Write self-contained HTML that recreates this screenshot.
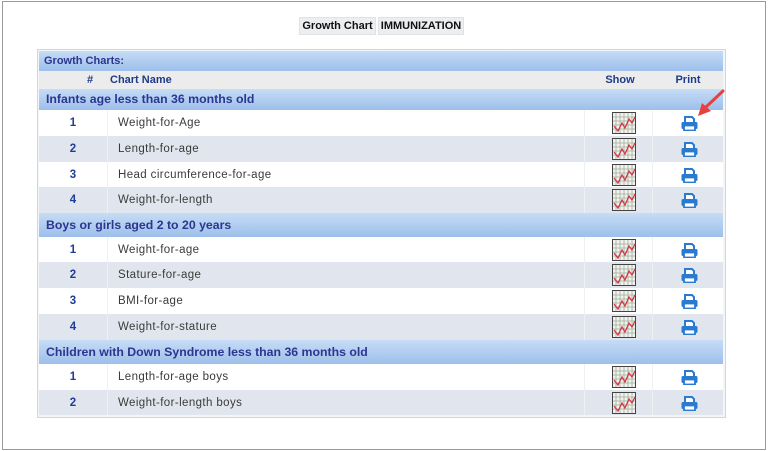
<!DOCTYPE html>
<html><head><meta charset="utf-8"><style>
*{margin:0;padding:0;box-sizing:border-box}
body{width:768px;height:451px;background:#fff;font-family:"Liberation Sans",Arial,sans-serif;position:relative;overflow:hidden}
.frame{position:absolute;left:2px;top:1px;width:764px;height:449px;border:1px solid #9a9a9a}
.tab{position:absolute;top:17px;height:18px;background:#eceef0;border:1px solid #e0e3e6;font-size:11px;font-weight:bold;color:#111;line-height:16px;text-align:center}
.tbl{position:absolute;left:37px;top:49px;width:689px;height:369px;border:1px solid #c4d8ee;background:#f3f6f9}
.r{position:absolute;left:39px;width:684px}
.blue{background:linear-gradient(#c6dcf6,#9dbfea);color:#2c3590;font-size:11px;font-weight:bold;padding-left:5px}
.gp{font-size:12.3px;padding-left:7px}
.hd{background:#ececec;color:#1e3a8a;font-size:11px;font-weight:bold}
.row{font-size:11.5px}
.w{background:#fff}.g{background:#e1e6ee}
.c{position:absolute;top:0;height:100%;display:flex;align-items:center}
.n{left:0;width:69px;justify-content:center;color:#1f3d96;font-weight:bold;border-right:1px solid #eef0f3}
.nm{left:69px;width:477px;padding-left:10px;color:#3a3a3a;letter-spacing:.4px;border-right:1px solid #eef0f3}
.sh{left:546px;width:68px;justify-content:center;padding-left:10px;border-right:1px solid #eef0f3}
.pr{left:614px;width:70px;justify-content:center;padding-left:2px}
</style></head><body>
<div class="frame"></div>
<div class="tab" style="left:299px;width:77px">Growth Chart</div>
<div class="tab" style="left:378px;width:86px">IMMUNIZATION</div>
<div class="tbl"></div>
<svg width="0" height="0" style="position:absolute">
<defs>
<g id="ch"><rect x="0.5" y="0.5" width="23" height="21" fill="#f4f0ef" stroke="#444"/>
<path d="M4 1v20M8 1v20M12 1v20M16 1v20M20 1v20M1 5h22M1 9h22M1 13h22M1 17h22" stroke="#98b098" stroke-width="0.8"/>
<path d="M2 14l4 5 4-8 3 5 4-9 3 4 3-6" fill="none" stroke="#d03848" stroke-width="1.3"/></g>
<g id="pt"><path d="M4 2h7l2 2v4H4z" fill="#fff" stroke="#2a7ad0" stroke-width="2"/>
<rect x="0.5" y="7" width="16" height="7" rx="1.5" fill="#2a7ad0"/>
<rect x="3" y="10.5" width="11" height="5" fill="#fff" stroke="#2a7ad0" stroke-width="1.8"/></g>
</defs></svg>
<div class="r blue" style="top:51px;height:20px;line-height:20px;left:39px">Growth Charts:</div>
<div class="r hd" style="top:71px;height:18px">
<div class="c" style="left:41px;width:20px;justify-content:center">#</div>
<div class="c" style="left:71px">Chart Name</div>
<div class="c" style="left:546px;width:68px;padding-left:2px;justify-content:center">Show</div>
<div class="c" style="left:614px;width:70px;justify-content:center">Print</div></div>
<div class="r blue gp" style="top:89px;height:21px;line-height:21px">Infants age less than 36 months old</div>
<div class="r row w" style="top:110px;height:26px"><div class="c n">1</div><div class="c nm">Weight-for-Age</div><div class="c sh"><svg width="24" height="22"><use href="#ch"/></svg></div><div class="c pr"><svg width="17" height="16"><use href="#pt"/></svg></div></div>
<div class="r row g" style="top:136px;height:26px"><div class="c n">2</div><div class="c nm">Length-for-age</div><div class="c sh"><svg width="24" height="22"><use href="#ch"/></svg></div><div class="c pr"><svg width="17" height="16"><use href="#pt"/></svg></div></div>
<div class="r row w" style="top:162px;height:25px"><div class="c n">3</div><div class="c nm">Head circumference-for-age</div><div class="c sh"><svg width="24" height="22"><use href="#ch"/></svg></div><div class="c pr"><svg width="17" height="16"><use href="#pt"/></svg></div></div>
<div class="r row g" style="top:187px;height:26px"><div class="c n">4</div><div class="c nm">Weight-for-length</div><div class="c sh"><svg width="24" height="22"><use href="#ch"/></svg></div><div class="c pr"><svg width="17" height="16"><use href="#pt"/></svg></div></div>
<div class="r blue gp" style="top:213px;height:24px;line-height:24px">Boys or girls aged 2 to 20 years</div>
<div class="r row w" style="top:237px;height:25px"><div class="c n">1</div><div class="c nm">Weight-for-age</div><div class="c sh"><svg width="24" height="22"><use href="#ch"/></svg></div><div class="c pr"><svg width="17" height="16"><use href="#pt"/></svg></div></div>
<div class="r row g" style="top:262px;height:26px"><div class="c n">2</div><div class="c nm">Stature-for-age</div><div class="c sh"><svg width="24" height="22"><use href="#ch"/></svg></div><div class="c pr"><svg width="17" height="16"><use href="#pt"/></svg></div></div>
<div class="r row w" style="top:288px;height:26px"><div class="c n">3</div><div class="c nm">BMI-for-age</div><div class="c sh"><svg width="24" height="22"><use href="#ch"/></svg></div><div class="c pr"><svg width="17" height="16"><use href="#pt"/></svg></div></div>
<div class="r row g" style="top:314px;height:26px"><div class="c n">4</div><div class="c nm">Weight-for-stature</div><div class="c sh"><svg width="24" height="22"><use href="#ch"/></svg></div><div class="c pr"><svg width="17" height="16"><use href="#pt"/></svg></div></div>
<div class="r blue gp" style="top:340px;height:24px;line-height:24px">Children with Down Syndrome less than 36 months old</div>
<div class="r row w" style="top:364px;height:26px"><div class="c n">1</div><div class="c nm">Length-for-age boys</div><div class="c sh"><svg width="24" height="22"><use href="#ch"/></svg></div><div class="c pr"><svg width="17" height="16"><use href="#pt"/></svg></div></div>
<div class="r row g" style="top:390px;height:25px"><div class="c n">2</div><div class="c nm">Weight-for-length boys</div><div class="c sh"><svg width="24" height="22"><use href="#ch"/></svg></div><div class="c pr"><svg width="17" height="16"><use href="#pt"/></svg></div></div>
<svg style="position:absolute;left:692px;top:86px" width="40" height="36">
<path d="M31 5L14 21" stroke="#e8403c" stroke-width="3" stroke-linecap="round"/>
<path d="M6 30l4-13 9 8z" fill="#e8403c"/></svg>
</body></html>
